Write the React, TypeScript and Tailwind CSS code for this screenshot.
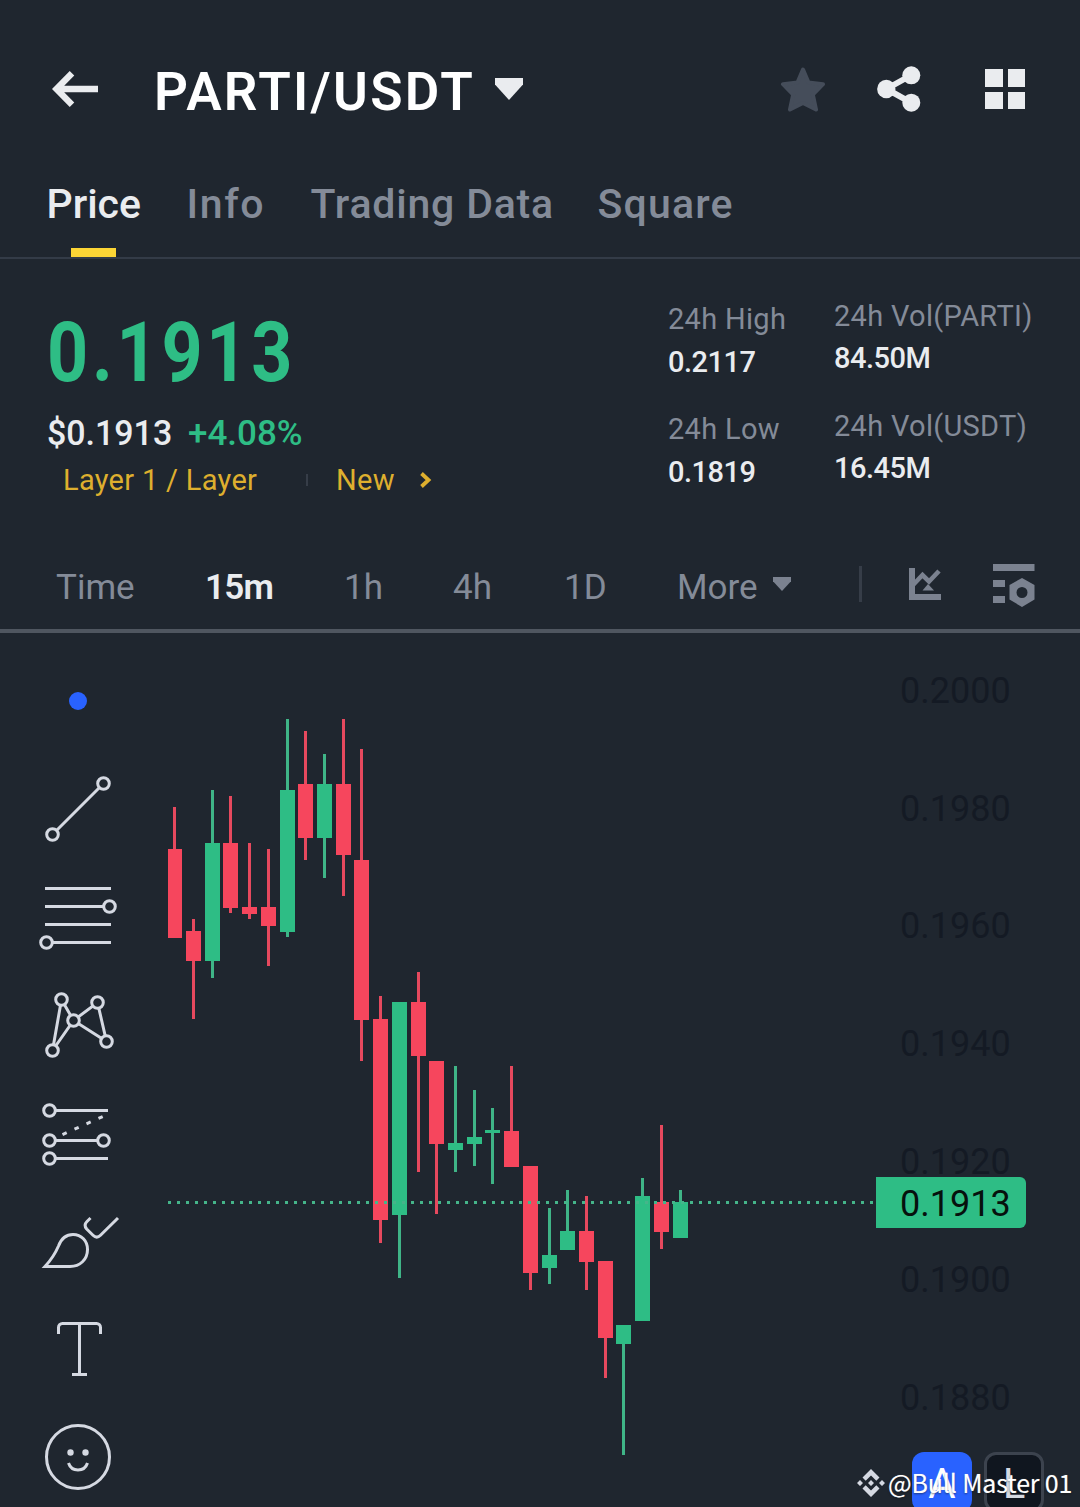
import type { ReactNode } from "react";

const tabs = [
  { label: "Price", width: "w-[140px]", active: true },
  { label: "Info", width: "w-[124px] tracking-[1.6px]" },
  { label: "Trading Data", width: "w-[287px] tracking-[0.8px]" },
  { label: "Square", width: "w-[140px] tracking-[1.2px]" },
];

const intervals = [
  { label: "Time", width: "w-[149px]" },
  { label: "15m", width: "w-[139px]", active: true },
  { label: "1h", width: "w-[109px]" },
  { label: "4h", width: "w-[111px]" },
  { label: "1D", width: "w-[113px]" },
  { label: "More", width: "w-[96px]" },
];

const axisLabels = ["0.2000", "0.1980", "0.1960", "0.1940", "0.1920", "0.1900", "0.1880"];

// x, wick top, body top, body bottom, wick bottom, is up
const candles: [number, number, number, number, number, boolean][] = [
  [168, 807, 849, 938, 938, false],
  [186, 919, 931, 961, 1019, false],
  [205, 790, 843, 961, 978, true],
  [223, 796, 843, 908, 913, false],
  [242, 843, 907, 914, 919, false],
  [261, 849, 907, 926, 966, false],
  [280, 719, 790, 932, 937, true],
  [298, 731, 784, 838, 860, false],
  [317, 754, 784, 838, 878, true],
  [336, 719, 784, 855, 896, false],
  [354, 749, 860, 1020, 1061, false],
  [373, 996, 1019, 1220, 1243, false],
  [392, 1002, 1002, 1215, 1278, true],
  [411, 972, 1002, 1056, 1172, false],
  [429, 1061, 1061, 1144, 1214, false],
  [448, 1066, 1143, 1150, 1172, true],
  [467, 1090, 1137, 1144, 1166, true],
  [485, 1108, 1130, 1133, 1184, true],
  [504, 1066, 1131, 1167, 1167, false],
  [523, 1166, 1166, 1273, 1290, false],
  [542, 1208, 1255, 1268, 1284, true],
  [560, 1190, 1231, 1250, 1250, true],
  [579, 1196, 1231, 1262, 1290, false],
  [598, 1261, 1261, 1338, 1378, false],
  [616, 1325, 1325, 1344, 1455, true],
  [635, 1178, 1196, 1321, 1321, true],
  [654, 1125, 1202, 1232, 1249, false],
  [673, 1190, 1202, 1238, 1238, true],
];

function Caret({ className }: { className: string }) {
  return (
    <svg className={className} viewBox="0 0 28 22" preserveAspectRatio="none" fill="currentColor">
      <path d="M0 0h28v6.500L14 22 0 6.500z" />
    </svg>
  );
}

function Header() {
  return (
    <header className="flex h-[178px] items-center pl-[52px]">
      <svg className="h-9 w-[46px]" viewBox="0 0 46 36" fill="none" stroke="#eaecef" strokeWidth="6.4">
        <path d="M4 18h42M20 2.300L4.500 18 20 33.700" />
      </svg>
      <h1 className="ml-[56px] w-[341px] pt-[5px] text-[53px] leading-[60px] font-semibold tracking-[2.3px] whitespace-nowrap text-white">
        PARTI/USDT
      </h1>
      <Caret className="h-[22px] w-7 text-[#eaecef]" />
      <svg
        className="ml-[257px] h-[46px] w-[46px]"
        viewBox="0 0 46 46"
        fill="#454d5a"
        stroke="#454d5a"
        strokeWidth="4"
        strokeLinejoin="round"
      >
        <path d="M23 3.500l5.500 13L43 18.200l-10.200 10.300L36 43.500l-13-6.500-13 6.500 3.200-15L3 18.200l14.500-1.700z" />
      </svg>
      <svg className="ml-[51px] h-[46px] w-[44px]" viewBox="0 0 44 46" fill="#eaecef">
        <path d="M34.500 9L9.500 23l25 13.800" fill="none" stroke="#eaecef" strokeWidth="6" />
        <circle cx="9.300" cy="23" r="9.200" />
        <circle cx="34.300" cy="9.300" r="9" />
        <circle cx="34.300" cy="36.700" r="9" />
      </svg>
      <div className="ml-[64px] grid h-10 w-10 grid-cols-2 gap-[5px]">
        <i className="bg-[#eaecef]" />
        <i className="bg-[#eaecef]" />
        <i className="bg-[#eaecef]" />
        <i className="bg-[#eaecef]" />
      </div>
    </header>
  );
}

function Tabs() {
  return (
    <nav className="flex h-[81px] border-b-2 border-[#333b47] pl-[46.5px] text-[41px] leading-[52px] font-medium">
      {tabs.map((tab) => (
        <div key={tab.label} className={tab.width}>
          <div
            className={`flex h-full w-fit flex-col items-center justify-between whitespace-nowrap ${
              tab.active ? "text-[#eaecef]" : "text-[#848b98]"
            }`}
          >
            <span>{tab.label}</span>
            {tab.active && <span className="h-[9px] w-[45px] bg-[#fcd535]" />}
          </div>
        </div>
      ))}
    </nav>
  );
}

function Stat({ label, value }: { label: string; value: string }) {
  return (
    <div className="whitespace-nowrap">
      <div className="tracking-[0.3px] text-[#848b98]">{label}</div>
      <div className="font-medium tracking-[-0.5px] text-[#eaecef]">{value}</div>
    </div>
  );
}

function PriceSummary() {
  return (
    <section className="flex h-[286px]">
      <div className="w-[668px] pt-[54px] pl-[47px]">
        <div className="origin-left scale-x-[0.87] text-[82.5px] leading-[80px] font-bold tracking-[4.3px] text-[#2ebd85]">
          0.1913
        </div>
        <div className="mt-[17px] flex text-[35px] leading-[48px] font-medium">
          <span className="w-[141px] origin-left scale-x-[0.97] text-[#eaecef]">$0.1913</span>
          <span className="text-[#2ebd85]">+4.08%</span>
        </div>
        <div className="mt-[2px] flex items-center text-[29px] leading-[40px] text-[#deaf2e]">
          <span className="ml-4 w-[243px] tracking-[0.3px]">Layer 1 / Layer</span>
          <span className="h-3 w-[2px] bg-[#363d48]" />
          <span className="ml-[28px] w-[84px] tracking-[0.4px]">New</span>
          <svg className="h-4 w-3" viewBox="0 0 12 16" fill="none" stroke="currentColor" strokeWidth="3.800">
            <path d="M1.500 1.500L8.500 8l-7 6.500" />
          </svg>
        </div>
      </div>
      <div className="flex w-[166px] flex-col gap-6 pt-[38.5px] text-[29px] leading-[43px]">
        <Stat label="24h High" value="0.2117" />
        <Stat label="24h Low" value="0.1819" />
      </div>
      <div className="flex flex-col gap-[25px] pt-9 text-[29px] leading-[42.400px]">
        <Stat label="24h Vol(PARTI)" value="84.50M" />
        <Stat label="24h Vol(USDT)" value="16.45M" />
      </div>
    </section>
  );
}

function IntervalBar() {
  return (
    <div className="flex h-[88px] items-center border-b-4 border-[#4f5660] pl-[56px] text-[35px] text-[#848b98]">
      {intervals.map((item) => (
        <span
          key={item.label}
          className={`pt-0.5 ${item.width} ${
            item.active ? "font-semibold tracking-[-0.8px] text-[#eaecef]" : ""
          }`}
        >
          {item.label}
        </span>
      ))}
      <Caret className="mb-1.5 h-[14px] w-[18px] text-[#7b8290]" />
      <span className="mb-1.5 ml-[68px] h-9 w-[3px] bg-[#363d48]" />
      <svg className="mb-1.5 ml-[47px] h-8 w-8" viewBox="0 0 32 32" fill="#7b8290">
        <path d="M0 0h6v26h26v6H0z" />
        <path d="M4 17l9.500-10 6.500 6.500L30 3" fill="none" stroke="#7b8290" strokeWidth="4.600" />
        <path d="M13.500 22.500L19 16l6 6.500z" />
      </svg>
      <svg className="mb-[3px] ml-[52px] h-[43px] w-[42px]" viewBox="0 0 42 43" fill="#7b8290">
        <path d="M0 0h41.500v7H0zM0 16h12v7H0zM0 32h12v7H0z" />
        <path
          fillRule="evenodd"
          d="M29 14l12.500 7v14.500L29 43l-12.500-7.500V21zM29 23a5.500 5.500 0 1 0 0 11 5.500 5.500 0 0 0 0-11z"
        />
      </svg>
    </div>
  );
}

function Tool({ children }: { children: ReactNode }) {
  return (
    <svg
      className="h-[84px] w-[84px] shrink-0 overflow-visible"
      viewBox="0 0 84 84"
      fill="none"
      stroke="#d5d9e2"
      strokeWidth="3"
    >
      {children}
    </svg>
  );
}

// Open ring used as the handle of a drawing tool
function Node({ x, y }: { x: number; y: number }) {
  return <circle cx={x} cy={y} r="5.800" fill="#1f262f" />;
}

function DrawingTools() {
  return (
    <aside className="flex w-[160px] flex-col gap-6 pt-[26px] pl-9">
      <div className="flex h-[84px] w-[84px] shrink-0 items-center justify-center">
        <span className="h-[18px] w-[18px] rounded-full bg-[#2962ff]" />
      </div>
      <Tool>
        <path d="M16.500 67.500l51-51" />
        <Node x={67.5} y={16.5} />
        <Node x={16.5} y={67.5} />
      </Tool>
      <Tool>
        <path d="M9 13.500h66M9 31.500h66M9 49.500h66M9 67.500h66" />
        <Node x={73.5} y={31.5} />
        <Node x={10.5} y={67.5} />
      </Tool>
      <Tool>
        <path d="M16.500 67.500l9-51 12 21zM37.500 37.500l24-18 9 39z" />
        <Node x={25.5} y={16.5} />
        <Node x={61.5} y={19.5} />
        <Node x={37.5} y={37.5} />
        <Node x={16.5} y={67.5} />
        <Node x={70.5} y={58.5} />
      </Tool>
      <Tool>
        <path d="M13.500 19.500H72M13.500 49.500h54M13.500 67.500H72" />
        <path d="M26.500 43.600L68 25" strokeDasharray="4.600 8.550" />
        <Node x={13.5} y={19.5} />
        <Node x={13.5} y={49.5} />
        <Node x={67.5} y={49.5} />
        <Node x={13.5} y={67.5} />
      </Tool>
      <Tool>
        <path d="M9 67.500C15 61 19.500 54 22.500 47c3-8 8-11.500 14.500-11.500 8.500 0 14.500 6.500 14.500 15 0 10-7.500 17-17.500 17z" />
        <path d="M54.500 19l-3.500 3.500c-2.500 2.500-2.500 5-.3 7.500l6.300 6.300c2.500 2.500 5 2.500 7.500 0L82 19" />
      </Tool>
      <Tool>
        <path d="M22.500 27v-6.500a4 4 0 0 1 4-4h34a4 4 0 0 1 4 4V27M43.500 16.500v51M36 67.500h15" />
      </Tool>
      <Tool>
        <circle cx="42" cy="42" r="31.500" />
        <circle cx="34.500" cy="37.500" r="3.200" fill="#d5d9e2" stroke="none" />
        <circle cx="49.500" cy="37.500" r="3.200" fill="#d5d9e2" stroke="none" />
        <path d="M32.500 48c1.500 4.500 5 7 9.500 7s8-2.500 9.500-7" />
      </Tool>
    </aside>
  );
}

function CandleChart() {
  return (
    <svg className="h-[874px] w-[716px] shrink-0" viewBox="160 633 716 874" shapeRendering="crispEdges">
      {candles.map(([x, high, top, bottom, low, up]) => (
        <g key={x}>
          <rect x={x === 168 ? 173 : x + 6} y={high} width="3" height={low - high} fill={up ? "#3fb487" : "#e6495e"} />
          <rect x={x} y={top} width={x === 168 ? 14 : 15} height={bottom - top} fill={up ? "#2ebd85" : "#f6465d"} />
        </g>
      ))}
      <path d="M168 1202.500H876" stroke="#45b58a" strokeWidth="3" strokeDasharray="3 6" />
    </svg>
  );
}

function PriceAxis() {
  return (
    <div className="-mt-px w-[204px] pl-6 text-[36px] text-[#141a24]">
      {axisLabels.map((label) => (
        <div key={label} className="flex h-[117.8px] items-center">
          {label}
        </div>
      ))}
    </div>
  );
}

function Watermark() {
  return (
    <div className="absolute top-[832px] left-[857px] flex items-start whitespace-nowrap text-white">
      <svg className="mt-1 h-7 w-7" viewBox="0 0 28 28" fill="#d5d9e2">
        <path d="M14 0l8.500 8.500-3.200 3.200L14 6.400l-5.300 5.300-3.200-3.200zM14 28l8.500-8.500-3.200-3.200-5.300 5.300-5.300-5.300-3.200 3.200z" />
        <path d="M3 11l3 3-3 3-3-3zM25 11l3 3-3 3-3-3zM14 11l3 3-3 3-3-3z" />
      </svg>
      <span className="-mt-px ml-[3px] font-['Noto_Sans_CJK_SC',sans-serif] text-[25px] leading-9 tracking-[-0.15px] [text-shadow:0_0_1px_rgba(255,255,255,0.4),0_1px_2px_rgba(0,0,0,0.5)]">
        @Bull Master 01
      </span>
    </div>
  );
}

export default function App() {
  return (
    <div className="h-[1507px] w-[1080px] overflow-hidden bg-[#1f262f] font-[Roboto,sans-serif]">
      <Header />
      <Tabs />
      <PriceSummary />
      <IntervalBar />
      <main className="relative flex h-[874px] overflow-hidden">
        <DrawingTools />
        <CandleChart />
        <PriceAxis />
        <div className="absolute top-[544px] left-[876px] flex h-[51px] w-[150px] items-center rounded-r-md bg-[#2ebd85] pt-0.5 pl-6 text-[36px] text-[#06110d]">
          0.1913
        </div>
        <div className="absolute top-[819px] left-[912px] flex gap-3 text-center text-[42px] leading-[63px]">
          <div className="h-[60px] w-[60px] rounded-xl bg-[#2962ff] text-white">A</div>
          <div className="h-[60px] w-[60px] rounded-xl border-[3px] border-[#3c434e] bg-[#10161f] leading-[57px] text-[#d5d9e2]">
            L
          </div>
        </div>
        <Watermark />
      </main>
    </div>
  );
}
